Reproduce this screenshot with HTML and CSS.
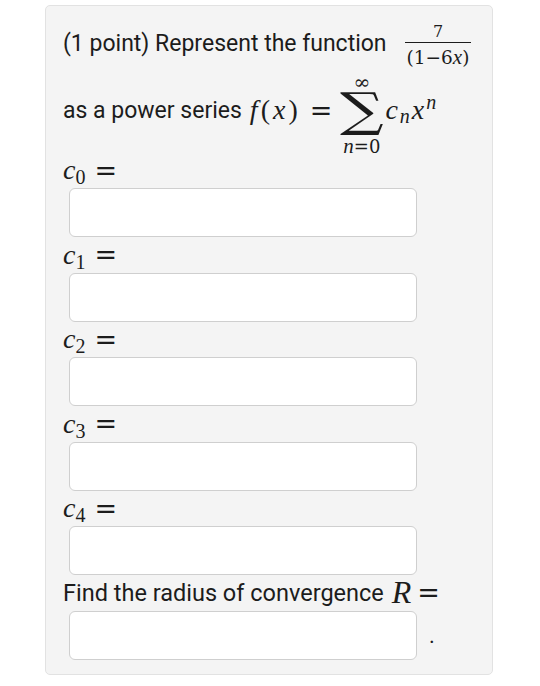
FILE: index.html
```html
<!DOCTYPE html>
<html>
<head>
<meta charset="utf-8">
<link rel="stylesheet" href="styles.css">
</head>
<body>
<div class="card">
  <div class="line line1">
    <span class="txt">(1 point) Represent the function</span>
    <span class="frac">
      <span class="num">7</span>
      <span class="den">(1−6<i>x</i>)</span>
    </span>
  </div>
  <div class="line line2">
    <span class="txt">as a power series</span>
    <span class="m fx"><i>f</i>(<i>x</i>)</span>
    <span class="eq">=</span>
    <span class="sum">
      <span class="inf">∞</span>
      <span class="sig">∑</span>
      <span class="lim"><i>n</i>=0</span>
    </span>
    <span class="m term"><i>c</i><sub><i>n</i></sub><i>x</i><sup><i>n</i></sup></span>
  </div>

  <div class="lab"><span class="m"><i>c</i><sub>0</sub></span><span class="eq">=</span></div>
  <div class="box"></div>
  <div class="lab"><span class="m"><i>c</i><sub>1</sub></span><span class="eq">=</span></div>
  <div class="box"></div>
  <div class="lab"><span class="m"><i>c</i><sub>2</sub></span><span class="eq">=</span></div>
  <div class="box"></div>
  <div class="lab"><span class="m"><i>c</i><sub>3</sub></span><span class="eq">=</span></div>
  <div class="box"></div>
  <div class="lab"><span class="m"><i>c</i><sub>4</sub></span><span class="eq">=</span></div>
  <div class="box"></div>
  <div class="lab"><span class="txt txt2">Find the radius of convergence</span><span class="m rr"><i>R</i></span><span class="eq eq-r">=</span></div>
  <div class="lastrow"><div class="box"></div><span class="dot">.</span></div>
</div>
</body>
</html>
```
FILE: styles.css
```css
html, body {
  margin: 0;
  padding: 0;
  background: #ffffff;
}
body {
  font-family: Roboto, "Liberation Sans", sans-serif;
  color: #1c1c1c;
}
.card {
  box-sizing: border-box;
  margin: 5px 0 0 45px;
  width: 448px;
  height: 670px;
  background: #f4f4f4;
  border: 1px solid #e2e2e2;
  border-radius: 5px;
  padding: 0 0 0 17px;
}
.line {
  display: flex;
  align-items: center;
}
.line1 {
  height: 74px;
}
.line2 {
  height: 60px;
  margin-bottom: 12.5px;
}
.txt {
  font-size: 23px;
  white-space: nowrap;
}
.txt2 {
  font-size: 23.5px;
}
.m {
  font-family: "Liberation Serif", serif;
  font-size: 28px;
  white-space: nowrap;
  margin-left: 8px;
}
.m i {
  font-style: italic;
}
.m sub {
  font-size: 20px;
  vertical-align: -5px;
  line-height: 0;
  font-style: normal;
}
.m sup {
  font-size: 20px;
  vertical-align: 10px;
  line-height: 0;
}
.fx {
  letter-spacing: 3px;
}
.term {
  letter-spacing: 2px;
  margin-left: 5px;
}
.term sub {
  vertical-align: -4px;
}
.rr {
  font-size: 32px;
  margin-left: 8px;
}
.eq {
  font-family: "DejaVu Serif", serif;
  font-size: 27px;
  margin-left: 9px;
}
.eq-r {
  margin-left: 6px;
}
.frac {
  display: inline-flex;
  flex-direction: column;
  align-items: center;
  margin-left: 18px;
  margin-top: 4.5px;
  font-family: "DejaVu Serif", serif;
}
.num {
  font-size: 16px;
  line-height: 20px;
}
.den {
  font-size: 18.5px;
  line-height: 20px;
  border-top: 1.5px solid #1c1c1c;
  padding: 4px 2px 0;
}
.frac i {
  font-family: "Liberation Serif", serif;
  font-size: 21px;
}
.sum {
  display: inline-flex;
  flex-direction: column;
  align-items: center;
  margin-left: 11px;
  margin-bottom: -12px;
  font-family: "DejaVu Serif", serif;
}
.inf {
  font-size: 20px;
  line-height: 12px;
  margin-bottom: 4px;
}
.sig {
  display: block;
  font-size: 47px;
  line-height: 47px;
  margin-top: -6px;
  margin-bottom: 2px;
  transform: scaleX(1.3);
}
.lim {
  font-size: 18px;
  line-height: 18px;
  margin-top: 2px;
  white-space: nowrap;
}
.lim i {
  font-family: "Liberation Serif", serif;
  font-size: 21px;
}
.lab {
  height: 35.5px;
  display: flex;
  align-items: center;
}
.lab .m:first-child {
  margin-left: 0;
}
.box {
  box-sizing: border-box;
  margin-left: 6px;
  width: 348px;
  height: 49px;
  background: #ffffff;
  border: 1.5px solid #cfcfcf;
  border-radius: 6px;
}
.lastrow {
  display: flex;
  align-items: center;
}
.dot {
  font-size: 22px;
  margin-left: 12px;
}
```
